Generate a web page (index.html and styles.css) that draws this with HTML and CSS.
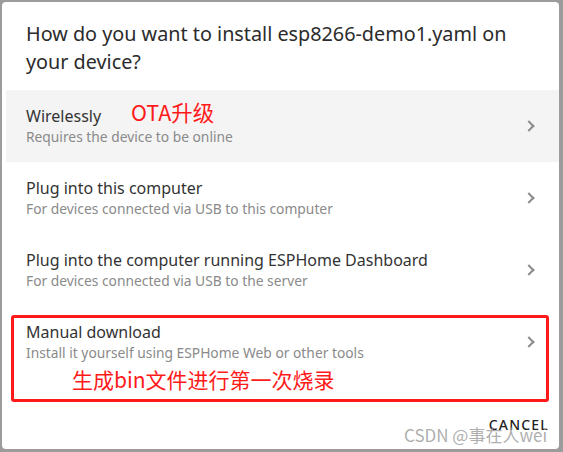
FILE: index.html
```html
<!DOCTYPE html>
<html lang="zh-CN">
  <head>
    <meta charset="UTF-8" />
    <meta name="viewport" content="width=device-width, initial-scale=1.0" />
    <title>Install esp8266-demo1.yaml</title>
    <link rel="stylesheet" href="styles.css">
  </head>
  <body>
    <section class="dialogo">
      <h1 class="titulo">How do you want to install esp8266-demo1.yaml on your device?</h1>
      <ul class="opciones">
        <li class="opcion hover">
          <div class="textos">
            <p class="nombre">Wirelessly</p>
            <p class="detalle">Requires the device to be online</p>
          </div>
          <span class="flecha"></span>
        </li>
        <li class="opcion">
          <div class="textos">
            <p class="nombre">Plug into this computer</p>
            <p class="detalle">For devices connected via USB to this computer</p>
          </div>
          <span class="flecha"></span>
        </li>
        <li class="opcion">
          <div class="textos">
            <p class="nombre">Plug into the computer running ESPHome Dashboard</p>
            <p class="detalle">For devices connected via USB to the server</p>
          </div>
          <span class="flecha"></span>
        </li>
        <li class="opcion">
          <div class="textos">
            <p class="nombre">Manual download</p>
            <p class="detalle">Install it yourself using ESPHome Web or other tools</p>
          </div>
          <span class="flecha"></span>
        </li>
      </ul>
      <div class="acciones">
        <button class="cancelar">Cancel</button>
      </div>

      <!-- anotaciones rojas -->
      <p class="nota-ota">OTA升级</p>
      <div class="marco">
        <p class="nota">生成bin文件进行第一次烧录</p>
      </div>
      <p class="marca">CSDN @事在人wei</p>
    </section>
  </body>
</html>
```

FILE: styles.css
```css
* {
  margin: 0;
  padding: 0;
  box-sizing: border-box;
}

body {
  height: 452px;
  background-color: #9c9c9c;
  padding: 2px 4px 3px 2px;
  font-family: "Noto Sans", sans-serif;
  overflow: hidden;
}

.dialogo {
  position: relative;
  height: 100%;
  background-color: #fff;
  border-radius: 4px;
  padding-top: 18px;
}

.titulo {
  font-size: 19.8px;
  font-weight: 400;
  line-height: 28px;
  color: #2b2b2b;
  padding: 0 24px;
}

.opciones {
  list-style: none;
  margin: 14px 0 0 4px;
}

.opcion {
  height: 72px;
  display: flex;
  align-items: flex-start;
  padding: 16px 26px 0 20px;
}

.opcion.hover {
  background-color: #f4f4f4;
}

.textos {
  flex: 1;
}

.nombre {
  font-size: 16px;
  line-height: 21px;
  color: #333;
}

.detalle {
  font-size: 13.8px;
  line-height: 20px;
  color: #8a8a8a;
}

.flecha {
  width: 8px;
  height: 8px;
  margin-top: 16px;
  border-top: 2px solid #8c8c8c;
  border-right: 2px solid #8c8c8c;
  transform: rotate(45deg);
}

.acciones {
  display: flex;
  justify-content: flex-end;
  padding: 39px 10px 0 0;
}

.cancelar {
  background: none;
  border: none;
  font-family: "Noto Sans", sans-serif;
  font-size: 14px;
  font-weight: 500;
  line-height: 16px;
  letter-spacing: 1.2px;
  text-transform: uppercase;
  color: #222;
  padding: 0;
}

.nota-ota {
  position: absolute;
  left: 129px;
  top: 96px;
  font-family: "Noto Sans CJK SC", sans-serif;
  font-size: 21.5px;
  line-height: 28px;
  color: #ff1a1a;
}

.marco {
  position: absolute;
  left: 9px;
  top: 313px;
  width: 538px;
  height: 87px;
  border: 3px solid #ff1a1a;
  border-radius: 3px;
  display: flex;
  align-items: flex-end;
  padding: 0 0 6px 58px;
}

.nota {
  font-family: "Noto Sans CJK SC", sans-serif;
  font-size: 21px;
  line-height: 28px;
  color: #ff1a1a;
}

.marca {
  position: absolute;
  left: 402px;
  top: 421px;
  font-family: "Noto Sans CJK SC", sans-serif;
  font-size: 17px;
  line-height: 24px;
  color: rgba(160, 160, 160, 0.85);
}
```
